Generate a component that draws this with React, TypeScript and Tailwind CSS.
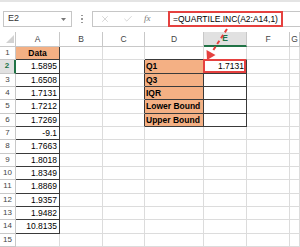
import { Check, X } from "lucide-react";

const dataA = [
  "Data",
  "1.5895",
  "1.6508",
  "1.7131",
  "1.7212",
  "1.7269",
  "-9.1",
  "1.7663",
  "1.8018",
  "1.8349",
  "1.8869",
  "1.9357",
  "1.9482",
  "10.8135",
];

const labels = ["Q1", "Q3", "IQR", "Lower Bound", "Upper Bound"];
const cols = ["A", "B", "C", "D", "E", "F", "G"];

// boxed = cells that have the dark table border
function boxed(row: number, col: number) {
  if (col === 0) return row >= 1 && row <= 14;
  if (col === 3 || col === 4) return row >= 2 && row <= 6;
  return false;
}

function Cell({ row, col }: { row: number; col: number }) {
  const darkR = boxed(row, col) || boxed(row, col + 1);
  const darkB = boxed(row, col) || boxed(row + 1, col);
  const orange = (col === 0 && row === 1) || (col === 3 && row >= 2 && row <= 6);

  let text = "";
  let align = "justify-end pr-[2px]";
  let bold = "";
  if (col === 0 && row >= 1 && row <= 14) {
    text = dataA[row - 1];
    if (row === 1) {
      align = "justify-center";
      bold = "font-bold";
    }
  }
  if (col === 3 && row >= 2 && row <= 6) {
    text = labels[row - 2];
    align = "justify-start pl-[1px]";
    bold = "font-bold";
  }
  if (col === 4 && row === 2) text = "1.7131";

  return (
    <div
      className={`relative flex h-[13.33px] items-center border-r border-b text-[8.5px] leading-none text-black ${align} ${bold} ${
        darkR ? "border-r-[#3a3a3a]" : "border-r-[#dcdcdc]"
      } ${darkB ? "border-b-[#3a3a3a]" : "border-b-[#dcdcdc]"} ${
        orange ? "bg-[#f4b084]" : "bg-white"
      }`}
    >
      {text}
      {col === 4 && row === 2 && (
        <div className="absolute -top-px -left-px right-0 bottom-0 border-2 border-[#e5413f]" />
      )}
    </div>
  );
}

export default function App() {
  const rows = Array.from({ length: 15 }, (_, i) => i + 1);

  return (
    <div className="relative h-[247px] w-[300px] overflow-hidden bg-white font-['Liberation_Sans',Arial,sans-serif]">
      {/* formula bar */}
      <div className="h-[32px] border-t-2 border-t-[#e4e4e4] pt-[9px]">
        <div className="flex h-[16px] items-stretch">
          <div className="ml-[3px] flex w-[69px] items-center justify-between border border-[#c6c6c6] pr-[5px] pl-[4px]">
            <span className="text-[9px] text-[#333]">E2</span>
            <svg width="5" height="3" viewBox="0 0 5 3">
              <path d="M0 0 L5 0 L2.5 3 Z" fill="#777" />
            </svg>
          </div>
          <div className="flex w-[20px] flex-col items-center justify-center gap-[2px]">
            <span className="h-[1.5px] w-[1.5px] bg-[#999]" />
            <span className="h-[1.5px] w-[1.5px] bg-[#999]" />
            <span className="h-[1.5px] w-[1.5px] bg-[#999]" />
          </div>
          <div className="flex flex-1 items-center border border-r-0 border-[#c6c6c6]">
            <div className="flex w-[75px] items-center">
              <X size={10} strokeWidth={1.3} className="ml-[7px] text-[#b4b4b4]" />
              <Check size={10} strokeWidth={1.3} className="ml-[13px] text-[#b4b4b4]" />
              <span className="ml-[11px] font-['Liberation_Serif',serif] text-[9px] text-[#777] italic">
                fx
              </span>
            </div>
            <div className="flex h-[16px] w-[115px] items-center border-2 border-[#e5413f] pl-[3px] text-[8.5px] whitespace-nowrap text-black">
              =QUARTILE.INC(A2:A14,1)
            </div>
          </div>
        </div>
      </div>

      {/* sheet grid */}
      <div className="grid grid-cols-[16px_44px_43px_42px_59px_43px_43px_10px]">
        {/* header row */}
        <div className="relative h-[15px] border-r border-b border-[#c8c8c8]">
          <svg className="absolute right-[1px] bottom-[3px]" width="8" height="8" viewBox="0 0 8 8">
            <path d="M8 0 L8 8 L0 8 Z" fill="#d2d2d2" />
          </svg>
        </div>
        {cols.map((c) => (
          <div
            key={c}
            className={`flex h-[15px] items-center justify-center border-r text-[8.5px] ${
              c === "E"
                ? "border-b-2 border-r-[#c8c8c8] border-b-[#217346] bg-[#e1e1e1] font-bold text-[#217346]"
                : "border-b border-[#c8c8c8] text-[#444]"
            }`}
          >
            {c}
          </div>
        ))}

        {rows.map((r) => (
          <div key={r} className="contents">
            <div
              className={`flex h-[13.33px] items-center justify-center border-b text-[8px] ${
                r === 2
                  ? "border-r-2 border-r-[#217346] border-b-[#c8c8c8] bg-[#e1e1e1] font-bold text-[#217346]"
                  : "border-r border-[#c8c8c8] text-[#444]"
              }`}
            >
              {r}
            </div>
            {cols.map((_, ci) => (
              <Cell key={ci} row={r} col={ci} />
            ))}
          </div>
        ))}
      </div>

      {/* annotation arrow */}
      <svg className="pointer-events-none absolute top-0 left-0" width="300" height="247">
        <line
          x1="227"
          y1="29"
          x2="212"
          y2="52"
          stroke="#e5413f"
          strokeWidth="2"
          strokeDasharray="4 3"
        />
        <path d="M207 60 L206.5 50 L215.5 55 Z" fill="#e5413f" />
      </svg>
    </div>
  );
}
